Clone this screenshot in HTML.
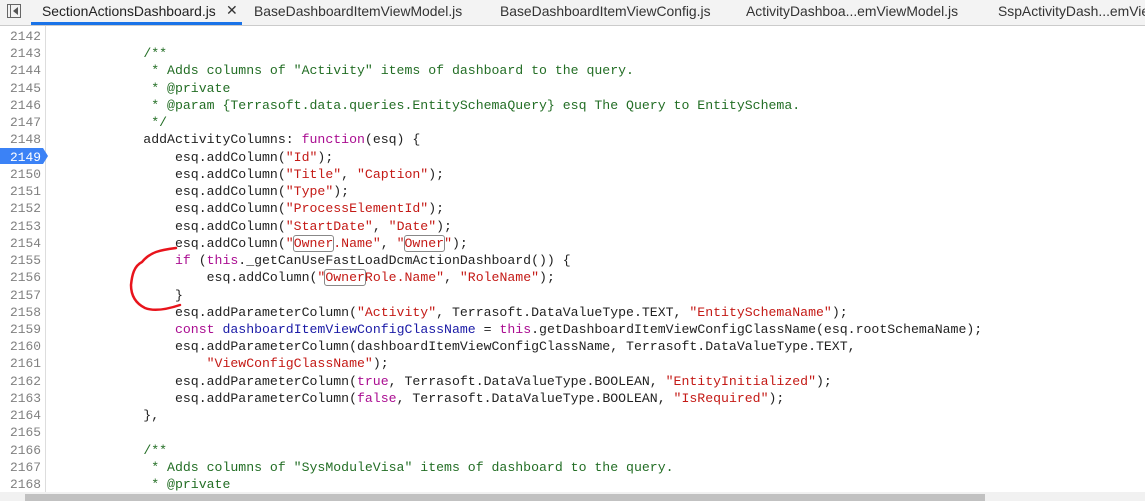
<!DOCTYPE html>
<html><head><meta charset="utf-8"><style>
body{margin:0;width:1145px;height:501px;overflow:hidden;background:#fff;position:relative;font-family:"Liberation Sans",sans-serif}
.tabs{position:absolute;left:0;top:0;width:1145px;height:25px;overflow:hidden;background:#f3f3f3;border-bottom:1px solid #cbcbcb;font-size:13.9px;color:#333;white-space:nowrap}
.tab{position:absolute;top:3px}
.ul{position:absolute;left:31px;top:22px;width:211px;height:3px;background:#1a73e8}
.gut{position:absolute;left:0;top:26px;width:45px;height:466px;border-right:1px solid #ddd}
.ln,.code{position:absolute;top:28px;font-family:"Liberation Mono",monospace;line-height:17.23px;white-space:pre}
.ln{left:0;width:41px;text-align:right;color:#808080;font-size:12.9px}
.code{left:80px;color:#222;font-size:13.2px}
.c{color:#236e25}.k{color:#aa0d91}.s{color:#c41a16}.v{color:#1a1aa6}
.b{outline:1px solid #888;border-radius:2px;outline-offset:0}
.hl{position:absolute;left:0;top:148px;width:43px;height:16px;background:#3b82f6}
</style></head><body>
<div class="tabs">
<div style="position:absolute;left:7px;top:4px;width:14px;height:14px;border:1px solid #666;box-sizing:border-box"></div>
<div style="position:absolute;left:10px;top:5px;width:1px;height:12px;background:#666"></div>
<div style="position:absolute;left:13px;top:7px;width:0;height:0;border-top:4px solid transparent;border-bottom:4px solid transparent;border-right:5px solid #555"></div>
<span class="tab" style="left:42px;color:#222">SectionActionsDashboard.js</span>
<span class="tab" style="left:226px;color:#333;font-size:14px;top:2px">✕</span>
<span class="tab" style="left:254px">BaseDashboardItemViewModel.js</span>
<span class="tab" style="left:500px">BaseDashboardItemViewConfig.js</span>
<span class="tab" style="left:746px">ActivityDashboa...emViewModel.js</span>
<span class="tab" style="left:998px">SspActivityDash...emViewConfig.js</span>
<div class="ul"></div>
</div>
<div class="gut"></div>
<div class="hl"></div>
<div style="position:absolute;left:43px;top:148px;width:0;height:0;border-top:8px solid transparent;border-bottom:8px solid transparent;border-left:5px solid #3b82f6"></div>
<div class="ln">2142
2143
2144
2145
2146
2147
2148
<span style="color:#fff">2149</span>
2150
2151
2152
2153
2154
2155
2156
2157
2158
2159
2160
2161
2162
2163
2164
2165
2166
2167
2168</div>
<div class="code">
        <span class="c">/**</span>
<span class="c">         * Adds columns of "Activity" items of dashboard to the query.</span>
<span class="c">         * @private</span>
<span class="c">         * @param {Terrasoft.data.queries.EntitySchemaQuery} esq The Query to EntitySchema.</span>
<span class="c">         */</span>
        addActivityColumns: <span class="k">function</span>(esq) {
            esq.addColumn(<span class="s">"Id"</span>);
            esq.addColumn(<span class="s">"Title"</span>, <span class="s">"Caption"</span>);
            esq.addColumn(<span class="s">"Type"</span>);
            esq.addColumn(<span class="s">"ProcessElementId"</span>);
            esq.addColumn(<span class="s">"StartDate"</span>, <span class="s">"Date"</span>);
            esq.addColumn(<span class="s">"<span class="b">Owner</span>.Name"</span>, <span class="s">"<span class="b">Owner</span>"</span>);
            <span class="k">if</span> (<span class="k">this</span>._getCanUseFastLoadDcmActionDashboard()) {
                esq.addColumn(<span class="s">"<span class="b">Owner</span>Role.Name"</span>, <span class="s">"RoleName"</span>);
            }
            esq.addParameterColumn(<span class="s">"Activity"</span>, Terrasoft.DataValueType.TEXT, <span class="s">"EntitySchemaName"</span>);
            <span class="k">const</span> <span class="v">dashboardItemViewConfigClassName</span> = <span class="k">this</span>.getDashboardItemViewConfigClassName(esq.rootSchemaName);
            esq.addParameterColumn(dashboardItemViewConfigClassName, Terrasoft.DataValueType.TEXT,
                <span class="s">"ViewConfigClassName"</span>);
            esq.addParameterColumn(<span class="k">true</span>, Terrasoft.DataValueType.BOOLEAN, <span class="s">"EntityInitialized"</span>);
            esq.addParameterColumn(<span class="k">false</span>, Terrasoft.DataValueType.BOOLEAN, <span class="s">"IsRequired"</span>);
        },

        <span class="c">/**</span>
<span class="c">         * Adds columns of "SysModuleVisa" items of dashboard to the query.</span>
<span class="c">         * @private</span></div>
<svg style="position:absolute;left:0;top:0" width="1145" height="501"><path d="M176,248 C160,250 150,252 142,262 C134,266 132,275 131,285 C131,295 135,303 145,308 C155,312 168,309 180,305" fill="none" stroke="#e8141c" stroke-width="2.5" stroke-linecap="round"/></svg>
<div style="position:absolute;left:0;top:492px;width:1145px;height:9px;background:#f1f1f1"></div>
<div style="position:absolute;left:25px;top:494px;width:960px;height:7px;background:#c1c1c1"></div>
</body></html>
